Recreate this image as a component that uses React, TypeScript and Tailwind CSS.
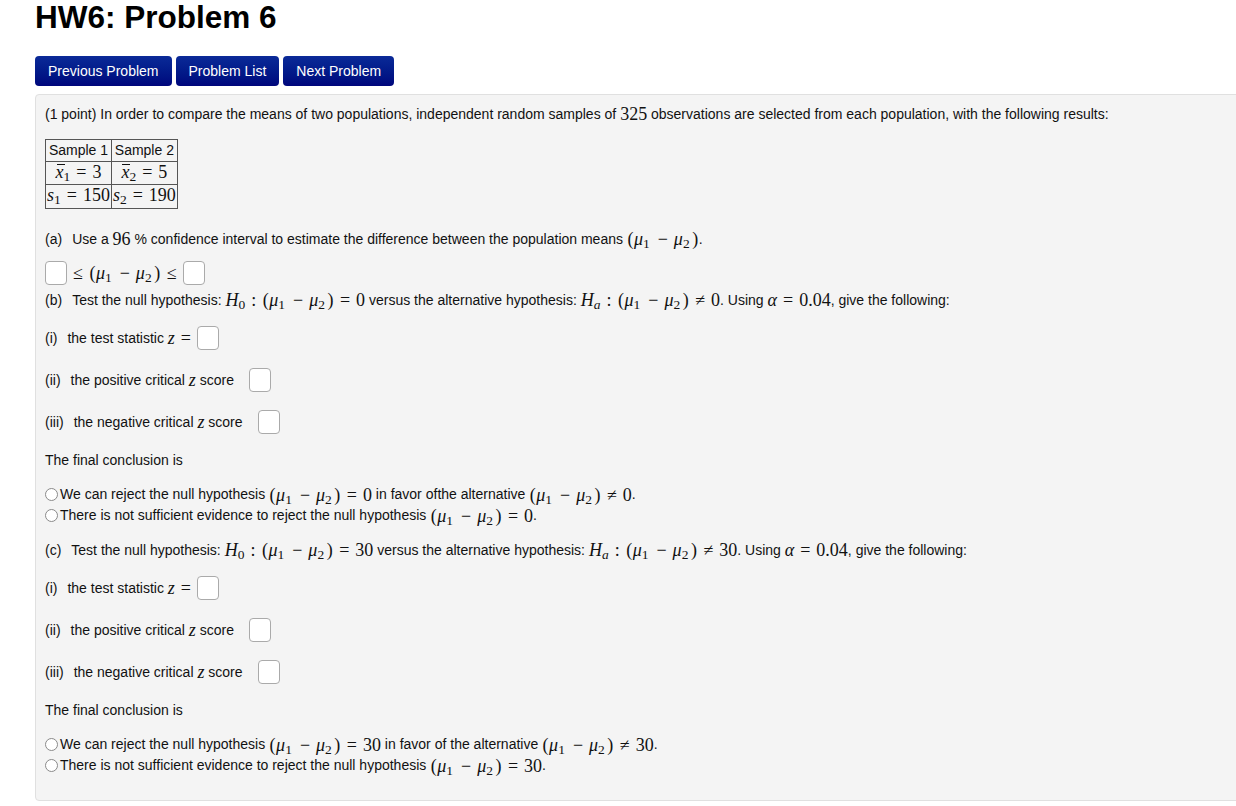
import React from "react";

const MF = "font-['Liberation_Serif','DejaVu_Serif',serif] text-[18px] leading-none";

const Mu = ({ n }: { n: string }) => (
  <span>
    <i>μ</i>
    <sub className="mr-[2px]">{n}</sub>
  </span>
);

const Diff = () => (
  <span>
    <span className="px-[0.5px]">(</span>
    <Mu n="1" />
    <span className="mx-[6px]">−</span>
    <Mu n="2" />
    <span className="px-[0.5px]">)</span>
  </span>
);

const M = ({ children }: { children: React.ReactNode }) => <span className={MF}>{children}</span>;

const Op = ({ c }: { c: string }) => <span className="mx-[6px]">{c}</span>;

const Box = () => (
  <span className="inline-block w-[22px] h-[24px] bg-white border border-[#aaaaaa] rounded-[4px] align-middle" />
);

const Radio = () => (
  <span className="inline-block w-[13px] h-[13px] rounded-full border border-[#8a8a8a] bg-white mr-[2px] shrink-0" />
);

const Label = ({ t }: { t: string }) => <span className="mr-[10px]">{t}</span>;

const XBar = ({ n }: { n: string }) => (
  <span>
    <span className="relative inline-block">
      <i>x</i>
      <span className="absolute left-[1px] right-[-1px] top-[1px] h-[1px] bg-current" />
    </span>
    <sub>{n}</sub>
  </span>
);

function Part({ letter, h0 }: { letter: string; h0: string }) {
  return (
    <div className="h-[20px] flex items-center whitespace-nowrap">
      <Label t={`(${letter})`} />
      <span>Test the null hypothesis:&nbsp;</span>
      <M>
        <i>H</i>
        <sub>0</sub>
        <Op c=":" />
        <Diff />
        <Op c="=" />
        {h0}
      </M>
      <span>&nbsp;versus the alternative hypothesis:&nbsp;</span>
      <M>
        <i>H</i>
        <sub>
          <i>a</i>
        </sub>
        <Op c=":" />
        <Diff />
        <Op c="≠" />
        {h0}
      </M>
      <span>. Using&nbsp;</span>
      <M>
        <i>α</i>
        <Op c="=" />
        0.04
      </M>
      <span>, give the following:</span>
    </div>
  );
}

function Questions({ first }: { first: number }) {
  return (
    <>
      <div className="h-[24px] flex items-center whitespace-nowrap" style={{ marginTop: first }}>
        <Label t="(i)" />
        <span>the test statistic&nbsp;</span>
        <M>
          <i>z</i>
          <span className="mx-[6px]">=</span>
        </M>
        <Box />
      </div>
      <div className="mt-[18px] h-[24px] flex items-center whitespace-nowrap">
        <Label t="(ii)" />
        <span>the positive critical&nbsp;</span>
        <M>
          <i>z</i>
        </M>
        <span>&nbsp;score</span>
        <span className="ml-[15px]">
          <Box />
        </span>
      </div>
      <div className="mt-[18px] h-[24px] flex items-center whitespace-nowrap">
        <Label t="(iii)" />
        <span>the negative critical&nbsp;</span>
        <M>
          <i>z</i>
        </M>
        <span>&nbsp;score</span>
        <span className="ml-[15px]">
          <Box />
        </span>
      </div>
    </>
  );
}

function Conclusion({ v, of }: { v: string; of: string }) {
  return (
    <>
      <div className="mt-[16px] h-[20px] flex items-center">The final conclusion is</div>
      <div className="mt-[14px] h-[21px] flex items-center whitespace-nowrap">
        <Radio />
        <span>We can reject the null hypothesis&nbsp;</span>
        <M>
          <Diff />
          <Op c="=" />
          {v}
        </M>
        <span>&nbsp;in favor {of}the alternative&nbsp;</span>
        <M>
          <Diff />
          <Op c="≠" />
          {v}
        </M>
        <span>.</span>
      </div>
      <div className="h-[21px] flex items-center whitespace-nowrap">
        <Radio />
        <span>There is not sufficient evidence to reject the null hypothesis&nbsp;</span>
        <M>
          <Diff />
          <Op c="=" />
          {v}
        </M>
        <span>.</span>
      </div>
    </>
  );
}

export default function App() {
  const btn =
    "h-[30px] px-[13px] rounded-[4px] bg-gradient-to-b from-[#0b2a98] to-[#00067c] text-white text-[14px] flex items-center";
  const td = "border border-[#555] px-[2px] text-center";
  return (
    <div className="w-[1236px] h-[806px] overflow-hidden bg-white text-[#111] font-['Liberation_Sans',Arial,sans-serif] text-[14px]">
      <div className="pl-[35px]">
        <h1 className="text-[31.5px] leading-[31px] font-bold text-black pt-[2px]">HW6: Problem 6</h1>
        <div className="mt-[23px] flex gap-[4px]">
          <button className={btn}>Previous Problem</button>
          <button className={btn}>Problem List</button>
          <button className={btn}>Next Problem</button>
        </div>
        <div className="mt-[8px] w-[1220px] h-[707px] bg-[#f4f4f4] border border-[#e0e0e0] rounded-[4px] pl-[9px] pt-[9px]">
          <div className="h-[20px] flex items-center whitespace-nowrap">
            <span>
              (1 point) In order to compare the means of two populations, independent random samples of&nbsp;
            </span>
            <M>325</M>
            <span>&nbsp;observations are selected from each population, with the following results:</span>
          </div>
          <table className="mt-[15px] border-collapse border border-[#333]">
            <tbody>
              <tr className="h-[21px]">
                <td className={td}>Sample 1</td>
                <td className={td}>Sample 2</td>
              </tr>
              <tr className="h-[23px]">
                <td className={td}>
                  <M>
                    <XBar n="1" />
                    <Op c="=" />3
                  </M>
                </td>
                <td className={td}>
                  <M>
                    <XBar n="2" />
                    <Op c="=" />5
                  </M>
                </td>
              </tr>
              <tr className="h-[24px]">
                <td className="border border-[#555] px-[1px] text-center">
                  <M>
                    <i>s</i>
                    <sub>1</sub>
                    <Op c="=" />
                    150
                  </M>
                </td>
                <td className="border border-[#555] px-[1px] text-center">
                  <M>
                    <i>s</i>
                    <sub>2</sub>
                    <Op c="=" />
                    190
                  </M>
                </td>
              </tr>
            </tbody>
          </table>
          <div className="mt-[20px] h-[20px] flex items-center whitespace-nowrap">
            <Label t="(a)" />
            <span>Use a&nbsp;</span>
            <M>96</M>
            <span>&nbsp;% confidence interval to estimate the difference between the population means&nbsp;</span>
            <M>
              <Diff />
            </M>
            <span>.</span>
          </div>
          <div className="mt-[12px] h-[24px] flex items-center whitespace-nowrap">
            <Box />
            <M>
              <Op c="≤" />
              <Diff />
              <Op c="≤" />
            </M>
            <Box />
          </div>
          <div className="mt-[5px]">
            <Part letter="b" h0="0" />
          </div>
          <Questions first={16} />
          <Conclusion v="0" of="of" />
          <div className="mt-[14px]">
            <Part letter="c" h0="30" />
          </div>
          <Questions first={16} />
          <Conclusion v="30" of="of " />
        </div>
      </div>
    </div>
  );
}
